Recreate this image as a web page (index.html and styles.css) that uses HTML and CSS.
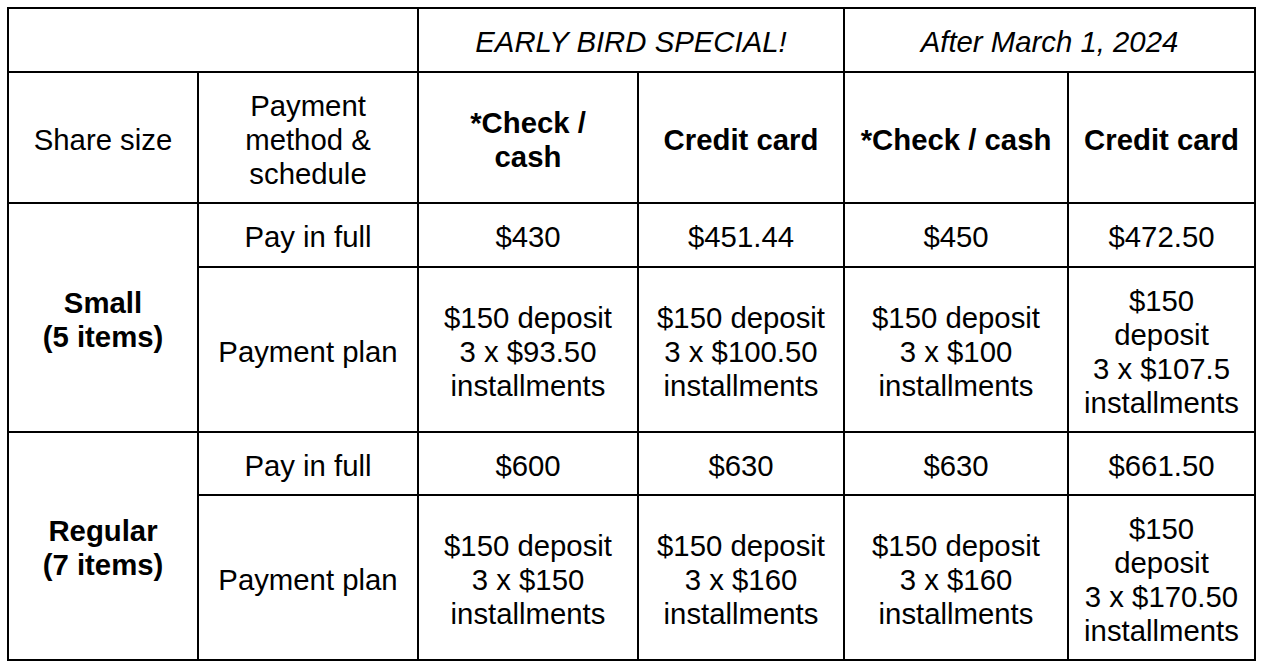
FILE: index.html
```html
<!DOCTYPE html>
<html lang="en">
<head>
<meta charset="utf-8">
<title>Share pricing</title>
<link rel="stylesheet" href="styles.css">
</head>
<body>
<div class="grid">
  <div class="cell span-c2"></div>
  <div class="cell span-c2 italic">EARLY BIRD SPECIAL!</div>
  <div class="cell span-c2 italic">After March 1, 2024</div>

  <div class="cell">Share size</div>
  <div class="cell">Payment method &amp; schedule</div>
  <div class="cell bold">*Check / cash</div>
  <div class="cell bold">Credit card</div>
  <div class="cell bold">*Check / cash</div>
  <div class="cell bold">Credit card</div>

  <div class="cell span-r2 bold">Small<br>(5 items)</div>
  <div class="cell">Pay in full</div>
  <div class="cell">$430</div>
  <div class="cell">$451.44</div>
  <div class="cell">$450</div>
  <div class="cell">$472.50</div>

  <div class="cell">Payment plan</div>
  <div class="cell">$150 deposit<br>3 x $93.50<br>installments</div>
  <div class="cell">$150 deposit<br>3 x $100.50<br>installments</div>
  <div class="cell">$150 deposit<br>3 x $100<br>installments</div>
  <div class="cell">$150 deposit<br>3 x $107.5<br>installments</div>

  <div class="cell span-r2 bold">Regular<br>(7 items)</div>
  <div class="cell">Pay in full</div>
  <div class="cell">$600</div>
  <div class="cell">$630</div>
  <div class="cell">$630</div>
  <div class="cell">$661.50</div>

  <div class="cell">Payment plan</div>
  <div class="cell">$150 deposit<br>3 x $150<br>installments</div>
  <div class="cell">$150 deposit<br>3 x $160<br>installments</div>
  <div class="cell">$150 deposit<br>3 x $160<br>installments</div>
  <div class="cell">$150 deposit<br>3 x $170.50<br>installments</div>
</div>
</body>
</html>
```

FILE: styles.css
```css
html, body {
  margin: 0;
  padding: 0;
  background: #ffffff;
}

body {
  font-family: "Liberation Sans", Arial, sans-serif;
  font-size: 22pt;
  line-height: normal;
  color: #000000;
}

.grid {
  margin: 7px 0 0 7px;
  display: grid;
  grid-template-columns: 188px 218px 218px 204px 222px 185px;
  grid-template-rows: 62px 129px 62px 163px 61px 163px;
  gap: 2px;
  padding: 2px;
  background: #000000;
  width: max-content;
}

.cell {
  background: #ffffff;
  display: flex;
  align-items: center;
  justify-content: center;
  text-align: center;
  padding: 4px 14.5px 0;
}

.span-c2 {
  grid-column: span 2;
}

.span-r2 {
  grid-row: span 2;
}

.bold {
  font-weight: bold;
}

.italic {
  font-style: italic;
}
```
